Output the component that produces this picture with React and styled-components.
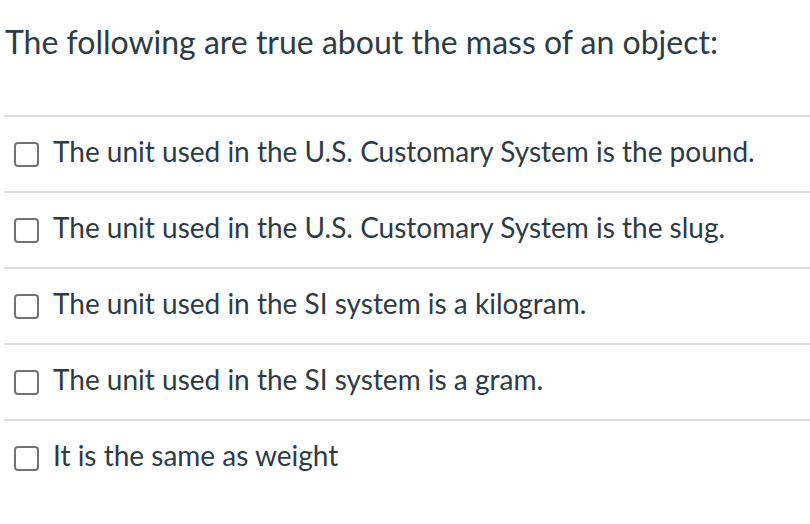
import styled, { createGlobalStyle } from 'styled-components';

const options = [
    'The unit used in the U.S. Customary System is the pound.',
    'The unit used in the U.S. Customary System is the slug.',
    'The unit used in the SI system is a kilogram.',
    'The unit used in the SI system is a gram.',
    'It is the same as weight',
];

export default function App () {
    return (
        <>
            <GlobalStyle />
            <Question>
                <Prompt>The following are true about the mass of an object:</Prompt>
                <Answers>
                    {options.map((text, index) => (
                        <Answer key={index}>
                            <Checkbox type="checkbox" />
                            <Label>{text}</Label>
                        </Answer>
                    ))}
                </Answers>
            </Question>
        </>
    );
}

const GlobalStyle = createGlobalStyle`
    * {
        box-sizing: border-box;
    }

    body {
        margin: 0;
        background-color: #ffffff;
        font-family: Lato, "Liberation Sans", sans-serif;
        color: #2d3b45;
    }
`;

const Question = styled.div`
    width: 810px;
    padding: 23px 0 0 4px;
`;

const Prompt = styled.div`
    font-size: 32px;
    line-height: 1.2;
    padding-left: 1px;
    margin-bottom: 54px;
`;

const Answers = styled.div`
    display: flex;
    flex-direction: column;
`;

const Answer = styled.label`
    display: flex;
    align-items: flex-start;
    border-top: 2px solid #dddddd;
    padding: 18px 0 22.4px 10px;
`;

const Checkbox = styled.input`
    appearance: none;
    width: 25px;
    height: 25px;
    margin: 7px 0 0 0;
    border: 2px solid #737373;
    border-radius: 4px;
    background-color: #ffffff;
    flex-shrink: 0;
`;

const Label = styled.span`
    font-size: 28px;
    line-height: 1.2;
    margin-left: 14px;
`;
